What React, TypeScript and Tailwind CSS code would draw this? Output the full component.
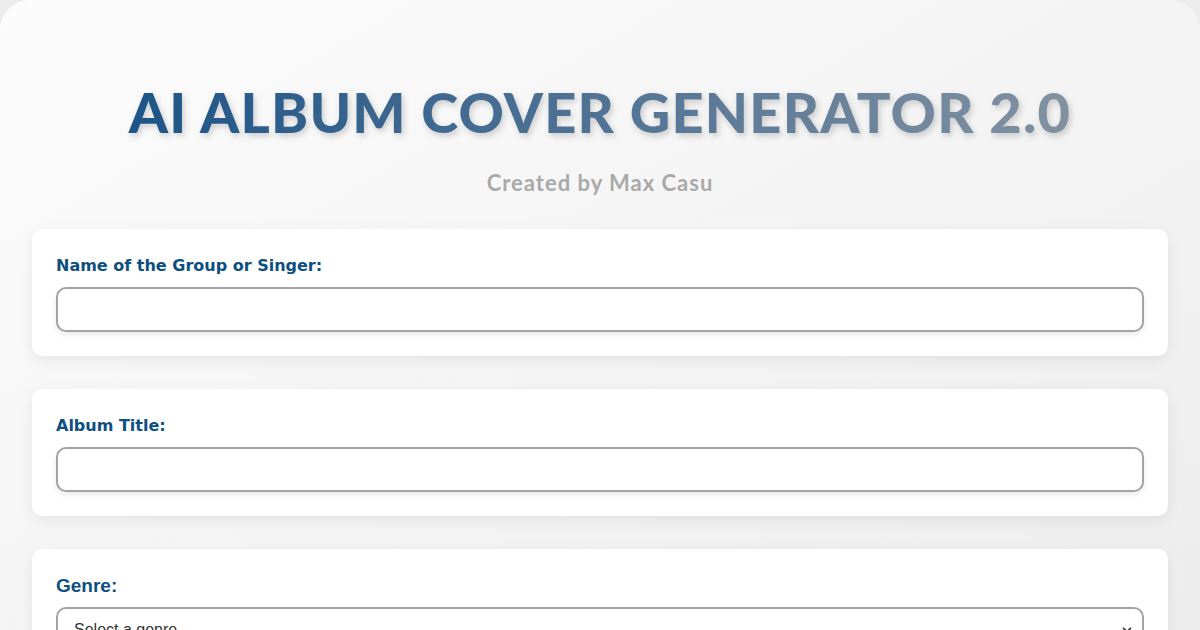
import { ChevronDown } from "lucide-react";

const fields = [
  { label: "Name of the Group or Singer:", kind: "input" },
  { label: "Album Title:", kind: "input" },
  { label: "Genre:", kind: "select" },
];

export default function App() {
  return (
    <div className="h-[630px] overflow-hidden bg-[#ececec]">
      <div className="min-h-[700px] rounded-[30px] bg-gradient-to-br from-[#fcfcfc] to-[#ececec] px-8 pt-[80px] font-['Lato',sans-serif]">
        <h1 className="bg-gradient-to-r from-[#0a4e84] to-[#8b97a3] bg-clip-text text-center text-[56px] leading-[64px] font-black tracking-[1.2px] text-transparent [filter:drop-shadow(2px_3px_3px_rgba(0,0,0,0.18))]">
          AI ALBUM COVER GENERATOR 2.0
        </h1>
        <p className="mt-[22px] text-center text-[22px] font-bold tracking-[1px] text-[#a9a9a9]">Created by Max Casu</p>
        <div className="mt-[30px] flex flex-col gap-[33px]">
          {fields.map((f) => (
            <div key={f.label} className="rounded-[10px] bg-white px-6 pt-[25px] pb-6 shadow-[0_4px_14px_rgba(0,0,0,0.07)]">
              <label
                className={
                  f.kind === "select"
                    ? "block font-['Liberation_Sans',sans-serif] text-[19px] leading-[24px] font-bold text-[#0c4f80]"
                    : "block font-['DejaVu_Sans',sans-serif] text-[16px] leading-[24px] font-bold text-[#0c4f80]"
                }
              >
                {f.label}
              </label>
              {f.kind === "input" ? (
                <input className="mt-[9px] block h-[45px] w-full rounded-[10px] border-2 border-[#a3a3a3] bg-white shadow-[0_3px_6px_rgba(0,0,0,0.08)] outline-none" />
              ) : (
                <div className="mt-[9px] flex h-[45px] w-full items-center justify-between rounded-[10px] border-2 border-[#a3a3a3] bg-white pr-2 pl-[16px] font-['Liberation_Sans',sans-serif] text-[16px] text-[#333]">
                  <span>Select a genre</span>
                  <ChevronDown size={14} strokeWidth={3} className="text-[#333]" />
                </div>
              )}
            </div>
          ))}
        </div>
      </div>
    </div>
  );
}
